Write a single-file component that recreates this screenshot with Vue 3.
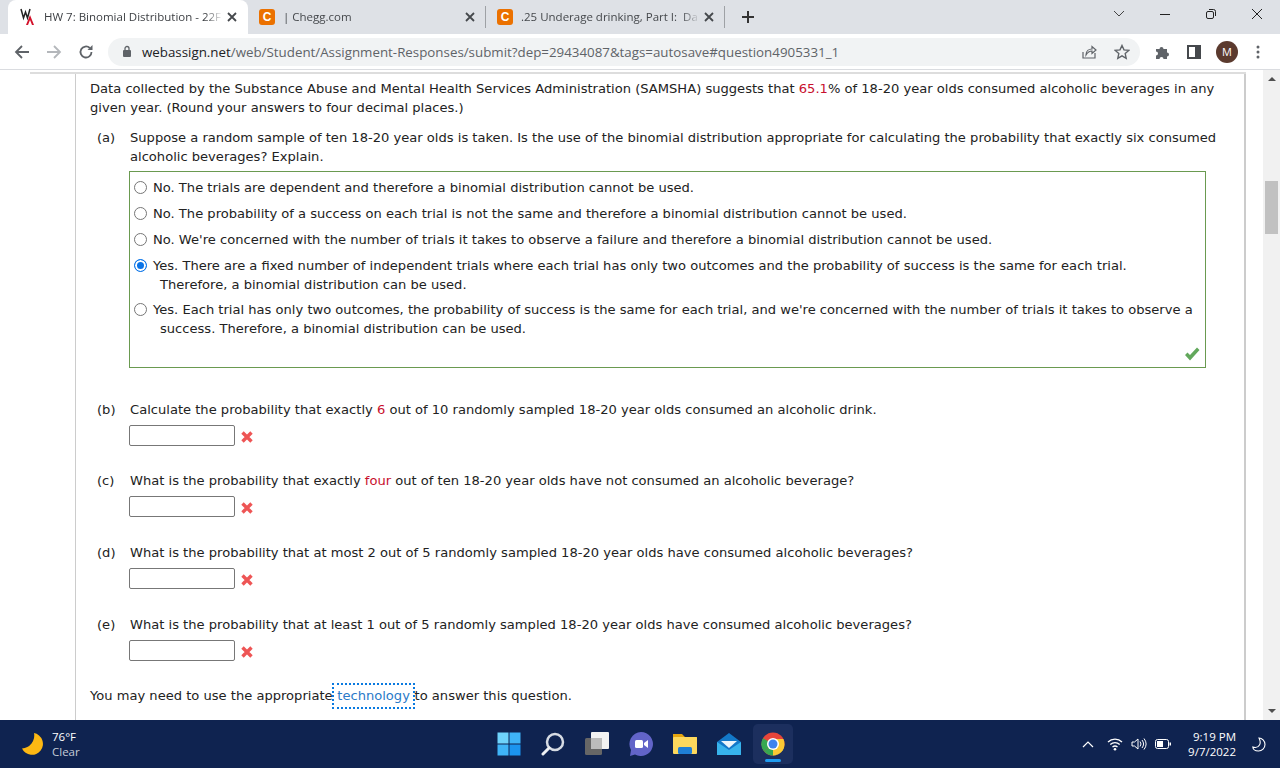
<template>
  <div class="screen">
    <!-- tab strip -->
    <div class="tabstrip">
      <div class="tab tab--active">
        <svg class="fav" width="18" height="18" viewBox="0 0 18 18">
          <path d="M1 1l2.500 9 2-6 2 6L10 1" fill="none" stroke="#222" stroke-width="1.500" />
          <path d="M6 17l4-10 4 10h-2l-2-5-2 5z" fill="#d3112a" />
        </svg>
        <span class="tab__title tab__title--active">HW 7: Binomial Distribution - 22F</span>
        <svg class="tab__x" width="10" height="10" viewBox="0 0 10 10"><path d="M1 1l8 8M9 1L1 9" stroke="#45484c" stroke-width="1.800" /></svg>
      </div>
      <div class="tab tab--two">
        <span class="chegg">C</span>
        <span class="tab__title">| Chegg.com</span>
        <svg class="tab__x" width="10" height="10" viewBox="0 0 10 10"><path d="M1 1l8 8M9 1L1 9" stroke="#45484c" stroke-width="1.800" /></svg>
      </div>
      <div class="tab tab--three">
        <span class="chegg">C</span>
        <span class="tab__title">.25 Underage drinking, Part I:&nbsp; Da</span>
        <svg class="tab__x" width="10" height="10" viewBox="0 0 10 10"><path d="M1 1l8 8M9 1L1 9" stroke="#45484c" stroke-width="1.800" /></svg>
      </div>
      <svg class="plus" width="14" height="14" viewBox="0 0 14 14"><path d="M7 1v12M1 7h12" stroke="#333" stroke-width="2" /></svg>
      <div class="wincontrols">
        <svg width="12" height="12" viewBox="0 0 12 12"><path d="M1 3l5 5 5-5" fill="none" stroke="#444" /></svg>
        <svg width="12" height="12" viewBox="0 0 12 12"><path d="M1 6.500h10" stroke="#222" /></svg>
        <svg width="12" height="12" viewBox="0 0 12 12"><rect x="1.500" y="3.500" width="7" height="7" rx="1.500" fill="none" stroke="#222" /><path d="M4 1.500h4.500a2 2 0 0 1 2 2V8" fill="none" stroke="#222" /></svg>
        <svg width="12" height="12" viewBox="0 0 12 12"><path d="M1 1l10 10M11 1L1 11" stroke="#222" /></svg>
      </div>
    </div>

    <!-- toolbar -->
    <div class="toolbar">
      <svg class="nav" width="16" height="16" viewBox="0 0 16 16"><path d="M15 8H2M8 2L2 8l6 6" fill="none" stroke="#5f6368" stroke-width="1.800" /></svg>
      <svg class="nav" width="16" height="16" viewBox="0 0 16 16"><path d="M1 8h13M8 2l6 6-6 6" fill="none" stroke="#b4b7bb" stroke-width="1.800" /></svg>
      <svg class="nav" width="16" height="16" viewBox="0 0 16 16"><path d="M13.500 8a5.500 5.500 0 1 1-1.700-4" fill="none" stroke="#5f6368" stroke-width="1.800" /><path d="M14.500 1v5h-5z" fill="#5f6368" /></svg>
      <div class="omnibox">
        <svg width="10" height="13" viewBox="0 0 10 13"><rect x="1" y="5" width="8" height="7" rx="1" fill="#5f6368" /><path d="M3 5V3.500a2 2 0 0 1 4 0V5" fill="none" stroke="#5f6368" stroke-width="1.300" /></svg>
        <span class="url"><b>webassign.net</b>/web/Student/Assignment-Responses/submit?dep=29434087&amp;tags=autosave#question4905331_1</span>
        <svg class="share" width="16" height="16" viewBox="0 0 16 16"><path d="M2 8v6h12V9" fill="none" stroke="#5f6368" stroke-width="1.200" /><path d="M5 11c0-4 3-6 6-6V2.500L15 6l-4 3.500V7c-2.500 0-4.500 1.500-6 4z" fill="none" stroke="#5f6368" stroke-width="1.200" /></svg>
        <svg width="16" height="16" viewBox="0 0 16 16"><path d="M8 1.500l2 4.400 4.800.5-3.600 3.200 1 4.700L8 11.900l-4.200 2.400 1-4.700L1.200 6.400 6 5.900z" fill="none" stroke="#5f6368" stroke-width="1.400" /></svg>
      </div>
      <svg class="puzzle" width="16" height="16" viewBox="0 0 16 16"><path d="M1 5h3.500a2 2 0 1 1 4 0H12v3.500a2 2 0 1 1 0 4V15H8.500a2 2 0 1 0-4 0H1v-3.500a2 2 0 1 0 0-4z" fill="#5f6368" /></svg>
      <svg class="panel" width="14" height="14" viewBox="0 0 14 14"><path d="M1 1h12v12H1z" fill="none" stroke="#45484c" stroke-width="2" /><path d="M8 1h5v12H8z" fill="#45484c" /></svg>
      <span class="avatar">M</span>
      <svg class="kebab" width="4" height="14" viewBox="0 0 4 14"><circle cx="2" cy="2" r="1.500" fill="#5f6368" /><circle cx="2" cy="7" r="1.500" fill="#5f6368" /><circle cx="2" cy="12" r="1.500" fill="#5f6368" /></svg>
    </div>

    <!-- page -->
    <div class="viewport">
      <div class="page">
        <div class="sheet">
          <p class="intro">
            Data collected by the Substance Abuse and Mental Health Services Administration (SAMSHA) suggests that
            <span class="red">65.1</span>% of 18-20 year olds consumed alcoholic beverages in any given year. (Round your answers to four decimal places.)
          </p>

          <div class="part part--a">
            <span class="part__label">(a)</span>
            <div class="part__body">
              Suppose a random sample of ten 18-20 year olds is taken. Is the use of the binomial distribution appropriate for calculating the probability that exactly six consumed alcoholic beverages? Explain.
            </div>
          </div>

          <div class="choices">
            <label v-for="c in choices" :key="c.text" class="choice">
              <span class="radio" :class="{ 'radio--on': c.on }"></span>
              <span class="choice__text">{{ c.text }}</span>
            </label>
            <svg class="tick" width="16" height="14" viewBox="0 0 16 14"><path d="M1 8l2.500-2.500L6 8l7-7.500L15.500 3 6 13.500z" fill="#62a85c" /></svg>
          </div>

          <div v-for="q in questions" :key="q.label" class="question" :class="'question--' + q.label">
            <div class="part">
              <span class="part__label">({{ q.label }})</span>
              <div class="part__body">
                {{ q.before }}<span v-if="q.red" class="red">{{ q.red }}</span>{{ q.after }}
              </div>
            </div>
            <div class="answer">
              <input class="answer__box" type="text" />
              <svg class="answer__x" width="14" height="14" viewBox="0 0 14 14"><path d="M2.500 2.500l9 9M11.500 2.500l-9 9" stroke="#ee5555" stroke-width="3.400" /></svg>
            </div>
          </div>

          <p class="footer">
            You may need to use the appropriate <a class="tech">technology</a> to answer this question.
          </p>
        </div>
      </div>
      <div class="scrollbar">
        <span class="arrow arrow--up"></span>
        <span class="thumb"></span>
        <span class="arrow arrow--down"></span>
      </div>
    </div>

    <!-- taskbar -->
    <div class="taskbar">
      <div class="weather">
        <svg width="22" height="24" viewBox="0 0 22 24"><path d="M13 1A11 11 0 1 1 1 16.500 13 13 0 0 0 13 1z" fill="#fdb813" /></svg>
        <div class="weather__text">
          <div class="weather__temp">76°F</div>
          <div class="weather__desc">Clear</div>
        </div>
      </div>
      <div class="apps">
        <svg width="24" height="24" viewBox="0 0 24 24">
          <rect x="0.500" y="0.500" width="11" height="11" fill="#6fd3fb" />
          <rect x="12.500" y="0.500" width="11" height="11" fill="#3fb4f7" />
          <rect x="0.500" y="12.500" width="11" height="11" fill="#3fb4f7" />
          <rect x="12.500" y="12.500" width="11" height="11" fill="#1b94ef" />
        </svg>
        <svg width="24" height="24" viewBox="0 0 24 24"><circle cx="14" cy="10" r="8" fill="none" stroke="#d6dbe3" stroke-width="2.500" /><path d="M8 16l-6 6" stroke="#eef0f3" stroke-width="3" stroke-linecap="round" /></svg>
        <svg width="24" height="24" viewBox="0 0 24 24"><rect x="0" y="6" width="17" height="17" rx="1.500" fill="#666" /><rect x="6" y="0" width="18" height="17" rx="1" fill="#f2f2f2" /><rect x="6" y="6" width="11" height="11" fill="#bbb" /></svg>
        <svg width="24" height="24" viewBox="0 0 24 24"><path d="M12 0a12 12 0 1 1-6 22.400L1 24l1-6A12 12 0 0 1 12 0z" fill="#6264c8" /><rect x="6" y="8" width="8" height="8" rx="1.500" fill="#fff" /><path d="M15 11l4-3v8l-4-3z" fill="#fff" /></svg>
        <svg width="24" height="24" viewBox="0 0 24 24"><path d="M0 2h9l3 3h12v3H0z" fill="#e5a50f" /><rect x="0" y="5" width="24" height="17" rx="1" fill="#fdd85d" /><rect x="5" y="15" width="14" height="7" rx="1.500" fill="#1f7fd6" /></svg>
        <svg width="24" height="24" viewBox="0 0 24 24"><path d="M0 10L12 1l12 9v13H0z" fill="#1378c8" /><path d="M4 9h16l-8 7z" fill="#ecf5fb" /><path d="M0 10l12 8 12-8v13H0z" fill="#37b3ec" /></svg>
        <div class="apps__chrome">
          <svg width="24" height="24" viewBox="0 0 24 24">
            <circle cx="12" cy="12" r="11.500" fill="#e7453a" />
            <path d="M12 12L3.200 19.500A11.500 11.500 0 0 1 2 6.200z" fill="#37a852" />
            <path d="M12 12l11 3A11.500 11.500 0 0 1 3.200 19.500z" fill="#37a852" />
            <path d="M12 7h10.400A11.500 11.500 0 0 1 12 23.500z" fill="#fcc934" />
            <circle cx="12" cy="12" r="6" fill="#fff" />
            <circle cx="12" cy="12" r="4.500" fill="#3f83ee" />
          </svg>
          <span class="apps__dot"></span>
        </div>
      </div>
      <div class="tray">
        <svg width="12" height="8" viewBox="0 0 12 8"><path d="M1 7l5-5 5 5" fill="none" stroke="#fff" stroke-width="1.200" /></svg>
        <svg class="tray__wifi" width="16" height="14" viewBox="0 0 16 14"><path d="M1 5a10 10 0 0 1 14 0M3.300 7.500a7 7 0 0 1 9.400 0M5.500 10a4 4 0 0 1 5 0" fill="none" stroke="#fff" stroke-width="1.300" /><circle cx="8" cy="12.300" r="1.300" fill="#fff" /></svg>
        <svg class="tray__vol" width="16" height="14" viewBox="0 0 16 14"><path d="M1 5v4h2.500L7 12V2L3.500 5z" fill="none" stroke="#fff" /><path d="M9 4.500a4 4 0 0 1 0 5M11 3a6.500 6.500 0 0 1 0 8M13 1.500a9 9 0 0 1 0 11" fill="none" stroke="#fff" /></svg>
        <svg class="tray__bat" width="16" height="10" viewBox="0 0 16 10"><rect x="0.500" y="0.500" width="13" height="9" rx="2" fill="none" stroke="#fff" /><rect x="2" y="2" width="6" height="6" fill="#fff" /><rect x="14.500" y="3.500" width="1.500" height="3" fill="#fff" /></svg>
        <div class="clock">
          <div>9:19 PM</div>
          <div>9/7/2022</div>
        </div>
        <svg class="tray__moon" width="14" height="15" viewBox="0 0 14 15"><path d="M7 1c3 0 6 3 6 6.500S10 14 6.500 14 1 12 .8 10c3 1 5.500 0 6.700-2S8 3 7 1z" fill="none" stroke="#fff" stroke-width="1.100" /></svg>
      </div>
    </div>
  </div>
</template>

<script setup>
const choices = [
  { text: 'No. The trials are dependent and therefore a binomial distribution cannot be used.' },
  { text: 'No. The probability of a success on each trial is not the same and therefore a binomial distribution cannot be used.' },
  { text: "No. We're concerned with the number of trials it takes to observe a failure and therefore a binomial distribution cannot be used." },
  { text: 'Yes. There are a fixed number of independent trials where each trial has only two outcomes and the probability of success is the same for each trial. Therefore, a binomial distribution can be used.', on: true },
  { text: "Yes. Each trial has only two outcomes, the probability of success is the same for each trial, and we're concerned with the number of trials it takes to observe a success. Therefore, a binomial distribution can be used." }
]

const questions = [
  { label: 'b', before: 'Calculate the probability that exactly ', red: '6', after: ' out of 10 randomly sampled 18-20 year olds consumed an alcoholic drink.' },
  { label: 'c', before: 'What is the probability that exactly ', red: 'four', after: ' out of ten 18-20 year olds have not consumed an alcoholic beverage?' },
  { label: 'd', before: 'What is the probability that at most 2 out of 5 randomly sampled 18-20 year olds have consumed alcoholic beverages?' },
  { label: 'e', before: 'What is the probability that at least 1 out of 5 randomly sampled 18-20 year olds have consumed alcoholic beverages?' }
]
</script>

<style>
html, body {
  margin: 0;
  overflow: hidden;
}
</style>

<style scoped>
.screen {
  width: 1280px;
  height: 768px;
  display: flex;
  flex-direction: column;
  overflow: hidden;
  background: #fff;
  font-family: "Open Sans", "Liberation Sans", sans-serif;
}

/* tab strip */
.tabstrip {
  height: 34px;
  flex: none;
  display: flex;
  align-items: center;
  background: #dee1e6;
  padding-left: 8px;
  box-sizing: border-box;
}

.tab {
  height: 34px;
  box-sizing: border-box;
  display: flex;
  align-items: center;
  font-size: 11.500px;
  color: #45484c;
  white-space: nowrap;
}

.tab--active {
  width: 240px;
  padding: 0 11px 0 12px;
  background: #fff;
  border-radius: 8px 8px 0 0;
}

.tab--two {
  width: 238px;
  padding: 0 10px 0 11px;
  border-right: 1px solid #9ea1a5;
  height: 22px;
}

.tab--three {
  width: 239px;
  padding: 0 10px 0 11px;
  border-right: 1px solid #9ea1a5;
  height: 22px;
}

.fav {
  flex: none;
  margin-right: 6px;
}

.chegg {
  flex: none;
  width: 16px;
  height: 16px;
  border-radius: 3px;
  background: #eb7100;
  color: #fff;
  font: bold 12px/16px "Liberation Sans", sans-serif;
  text-align: center;
  margin-right: 8px;
}

.tab__title {
  flex: 1;
  min-width: 0;
  overflow: hidden;
  padding-bottom: 2px;
  -webkit-mask-image: linear-gradient(to left, transparent, #000 18px);
  mask-image: linear-gradient(to left, transparent, #000 18px);
}

.tab__title--active {
  color: #3c3f43;
}

.tab__x {
  flex: none;
  margin-left: 4px;
}

.plus {
  margin-left: 16px;
}

.wincontrols {
  margin-left: auto;
  display: flex;
  align-items: center;
  gap: 34px;
  padding: 0 17px 6px 0;
}

/* toolbar */
.toolbar {
  height: 36px;
  flex: none;
  box-sizing: border-box;
  display: flex;
  align-items: center;
  background: #fff;
  border-bottom: 1px solid #dadce0;
  padding: 0 25px 0 14px;
}

.nav {
  flex: none;
  margin-right: 16px;
}

.omnibox {
  width: 1032px;
  height: 28px;
  margin-left: -2px;
  box-sizing: border-box;
  border-radius: 14px;
  background: #f1f3f4;
  display: flex;
  align-items: center;
  padding: 0 10px 0 14px;
  flex: none;
}

.url {
  font-size: 13.330px;
  color: #5f6368;
  margin-left: 10px;
  white-space: nowrap;
  flex: 1;
}

.url b {
  font-weight: 400;
  color: #202124;
}

.share {
  margin-right: 17px;
}

.puzzle {
  flex: none;
  margin-left: 15px;
}

.panel {
  flex: none;
  margin-left: 16px;
}

.avatar {
  flex: none;
  width: 22px;
  height: 22px;
  border-radius: 50%;
  background: #5b3a2e;
  color: #fff;
  font-size: 11px;
  line-height: 22px;
  text-align: center;
  margin-left: 15px;
}

.kebab {
  flex: none;
  margin-left: 18px;
}

/* page */
.viewport {
  flex: 1;
  min-height: 0;
  display: flex;
}

.page {
  flex: 1;
  min-width: 0;
  box-sizing: border-box;
  padding: 2px 17px 0 30px;
}

.sheet {
  height: 100%;
  box-sizing: border-box;
  border-top: 2px solid #ddd;
  padding: 5px 0 0 60px;
  position: relative;
  font-family: "DejaVu Sans", Verdana, sans-serif;
  font-size: 13.090px;
  line-height: 19px;
  color: #222;
}

.sheet::before {
  content: "";
  position: absolute;
  left: 45px;
  top: 0;
  right: 0;
  bottom: 0;
  border-left: 1px solid #ccc;
  border-right: 2px solid #ccc;
  pointer-events: none;
}

.intro {
  margin: 0;
  padding-right: 20px;
}

.red {
  color: #c8102e;
}

.part {
  display: flex;
  padding-left: 7px;
  padding-right: 15px;
}

.part--a {
  margin-top: 11px;
}

.part__label {
  flex: none;
  width: 33px;
}

.part__body {
  flex: 1;
  min-width: 0;
}

.choices {
  position: relative;
  margin: 5px 0 0 39px;
  width: 1077px;
  height: 197px;
  box-sizing: border-box;
  border: 1px solid #6a9a50;
  padding: 6px 0 0 4px;
}

.choice {
  display: flex;
  margin-bottom: 7px;
}

.choice:nth-of-type(4) {
  margin-bottom: 6px;
}

.radio {
  flex: none;
  width: 11px;
  height: 11px;
  margin: 3px 6px 0 0;
  border: 1px solid #767676;
  border-radius: 50%;
  background: #fff;
}

.radio--on {
  border-color: #0a74e8;
  box-shadow: inset 0 0 0 2px #fff;
  background: #0a74e8;
}

.choice__text {
  flex: 1;
  min-width: 0;
  padding: 0 8px 0 7px;
  text-indent: -7px;
}

.tick {
  position: absolute;
  right: 5px;
  bottom: 6px;
}

.question--b {
  margin-top: 32px;
}

.question--c {
  margin-top: 25px;
}

.question--d,
.question--e {
  margin-top: 26px;
}

.answer {
  display: flex;
  align-items: flex-start;
  gap: 5px;
  padding-left: 39px;
  margin-top: 6px;
}

.answer__box {
  width: 106px;
  height: 21px;
  box-sizing: border-box;
  border: 1px solid #777;
  border-radius: 2px;
  padding: 0;
  background: #fff;
}

.answer__x {
  margin-top: 5px;
}

.footer {
  margin: 25px 0 0;
}

.tech {
  display: inline-block;
  color: #2a7ac8;
  border: 2px dotted #0a7ae0;
  padding: 1.500px 3px;
  line-height: 19px;
  margin: -4px -4.500px;
}

/* scrollbar */
.scrollbar {
  width: 17px;
  flex: none;
  background: #f1f1f1;
  position: relative;
}

.arrow {
  position: absolute;
  left: 5px;
  width: 0;
  height: 0;
  border-left: 4px solid transparent;
  border-right: 4px solid transparent;
}

.arrow--up {
  top: 7px;
  border-bottom: 4px solid #505050;
}

.arrow--down {
  bottom: 7px;
  border-top: 4px solid #505050;
}

.thumb {
  position: absolute;
  left: 2px;
  right: 2px;
  top: 111px;
  height: 53px;
  background: #c1c1c1;
}

/* taskbar */
.taskbar {
  height: 48px;
  flex: none;
  display: flex;
  align-items: center;
  position: relative;
  background: #0f2350;
  color: #fff;
  font-size: 11.500px;
}

.weather {
  display: flex;
  align-items: center;
  gap: 9px;
  padding-left: 21px;
}

.weather__text {
  line-height: 15px;
}

.weather__desc {
  color: #c6ccd8;
}

.apps {
  position: absolute;
  left: 497px;
  top: 0;
  height: 48px;
  display: flex;
  align-items: center;
  gap: 20px;
}

.apps__chrome {
  width: 40px;
  height: 40px;
  margin: 0 0 0 -8px;
  border-radius: 5px;
  background: #1c2f5e;
  display: flex;
  align-items: center;
  justify-content: center;
  position: relative;
}

.apps__dot {
  position: absolute;
  left: 12px;
  bottom: 2px;
  width: 16px;
  height: 3px;
  border-radius: 2px;
  background: #1f9cf0;
}

.tray {
  margin-left: auto;
  display: flex;
  align-items: center;
  padding-right: 14px;
}

.tray__wifi {
  margin-left: 13px;
}

.tray__vol {
  margin-left: 8px;
}

.tray__bat {
  margin-left: 8px;
}

.clock {
  margin-left: 17px;
  text-align: right;
  line-height: 15px;
  width: 48px;
  white-space: nowrap;
}

.tray__moon {
  margin-left: 16px;
}
</style>
